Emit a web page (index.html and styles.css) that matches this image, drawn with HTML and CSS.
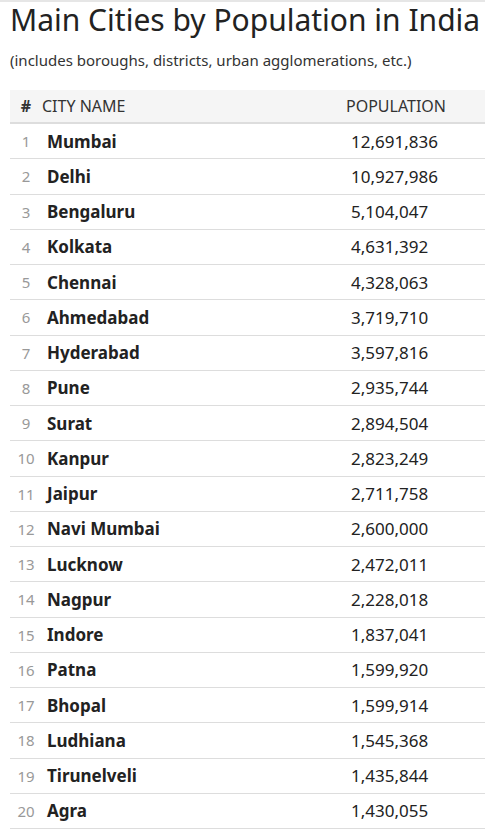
FILE: index.html
```html
<!DOCTYPE html>
<html lang="en">
<head>
    <meta charset="UTF-8">
    <meta name="viewport" content="width=device-width, initial-scale=1.0">
    <title>Main Cities by Population in India</title>
    <link rel="stylesheet" href="styles.css">
</head>
<body>
    <h1 class="title">Main Cities by Population in India</h1>
    <p class="subtitle">(includes boroughs, districts, urban agglomerations, etc.)</p>

    <table class="cities">
        <thead>
            <tr>
                <th class="num">#</th>
                <th class="name">CITY NAME</th>
                <th class="pop">POPULATION</th>
            </tr>
        </thead>
        <tbody>
            <tr><td class="num">1</td><td class="name">Mumbai</td><td class="pop">12,691,836</td></tr>
            <tr><td class="num">2</td><td class="name">Delhi</td><td class="pop">10,927,986</td></tr>
            <tr><td class="num">3</td><td class="name">Bengaluru</td><td class="pop">5,104,047</td></tr>
            <tr><td class="num">4</td><td class="name">Kolkata</td><td class="pop">4,631,392</td></tr>
            <tr><td class="num">5</td><td class="name">Chennai</td><td class="pop">4,328,063</td></tr>
            <tr><td class="num">6</td><td class="name">Ahmedabad</td><td class="pop">3,719,710</td></tr>
            <tr><td class="num">7</td><td class="name">Hyderabad</td><td class="pop">3,597,816</td></tr>
            <tr><td class="num">8</td><td class="name">Pune</td><td class="pop">2,935,744</td></tr>
            <tr><td class="num">9</td><td class="name">Surat</td><td class="pop">2,894,504</td></tr>
            <tr><td class="num">10</td><td class="name">Kanpur</td><td class="pop">2,823,249</td></tr>
            <tr><td class="num">11</td><td class="name">Jaipur</td><td class="pop">2,711,758</td></tr>
            <tr><td class="num">12</td><td class="name">Navi Mumbai</td><td class="pop">2,600,000</td></tr>
            <tr><td class="num">13</td><td class="name">Lucknow</td><td class="pop">2,472,011</td></tr>
            <tr><td class="num">14</td><td class="name">Nagpur</td><td class="pop">2,228,018</td></tr>
            <tr><td class="num">15</td><td class="name">Indore</td><td class="pop">1,837,041</td></tr>
            <tr><td class="num">16</td><td class="name">Patna</td><td class="pop">1,599,920</td></tr>
            <tr><td class="num">17</td><td class="name">Bhopal</td><td class="pop">1,599,914</td></tr>
            <tr><td class="num">18</td><td class="name">Ludhiana</td><td class="pop">1,545,368</td></tr>
            <tr><td class="num">19</td><td class="name">Tirunelveli</td><td class="pop">1,435,844</td></tr>
            <tr><td class="num">20</td><td class="name">Agra</td><td class="pop">1,430,055</td></tr>
        </tbody>
    </table>
</body>
</html>
```

FILE: styles.css
```css
body {
    font-family: "Noto Sans", "Open Sans", sans-serif;
    color: #222;
    background-color: #fff;
    margin: 0;
    padding: 0 0 0 10px;
    border-top: 2px solid #e6e6e6;
}

.title {
    font-size: 30px;
    font-weight: normal;
    line-height: 36px;
    margin: 0;
    color: #222;
}

.subtitle {
    font-size: 15px;
    color: #333;
    margin: 12px 0 20px 0;
}

.cities {
    width: 100%;
    border-collapse: collapse;
    table-layout: fixed;
}

.cities th {
    background-color: #f5f5f5;
    font-weight: normal;
    font-size: 16px;
    color: #333;
    text-align: left;
    height: 32px;
    border-bottom: 2px solid #ddd;
    padding: 0;
}

.cities td {
    height: 34.25px;
    border-bottom: 1px solid #ddd;
    padding: 0;
    font-size: 17px;
}

.num {
    width: 32px;
    text-align: center;
}

.cities td.num {
    color: #999;
    font-size: 15px;
}

.cities th.num {
    font-weight: bold;
    text-align: center;
}

.cities td.name {
    font-weight: bold;
    padding-left: 5px;
}

.cities th.pop {
    width: 139px;
}

.cities td.pop {
    padding-left: 5px;
}
```
